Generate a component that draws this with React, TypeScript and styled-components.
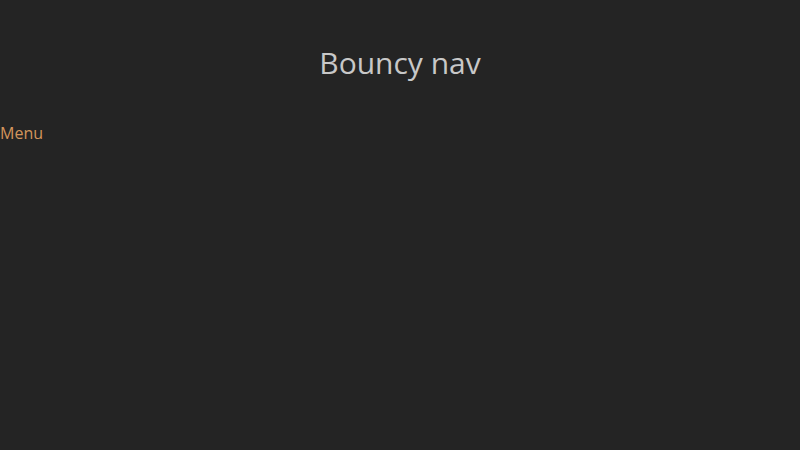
import React from "react";
import styled, { createGlobalStyle } from "styled-components";

const Global = createGlobalStyle`
  html, body {
    margin: 0;
    background: #242424;
    font-family: "Open Sans", "Liberation Sans", sans-serif;
  }
`;

const Page = styled.div`
  box-sizing: border-box;
  height: 450px;
  overflow: hidden;
  background: #242424;
  padding-top: 42px;
`;

const Title = styled.h1`
  margin: 0;
  text-align: center;
  font-size: 30px;
  font-weight: 400;
  line-height: 42px;
  color: #c8c8c8;
`;

const Nav = styled.nav`
  margin-top: 38px;
`;

const MenuToggle = styled.a`
  display: inline-block;
  font-size: 16px;
  line-height: 22px;
  color: #d4955c;
  text-decoration: none;
  cursor: pointer;
`;

export default function App() {
  return (
    <>
      <Global />
      <Page>
        <Title>Bouncy nav</Title>
        <Nav>
          <MenuToggle>Menu</MenuToggle>
        </Nav>
      </Page>
    </>
  );
}
